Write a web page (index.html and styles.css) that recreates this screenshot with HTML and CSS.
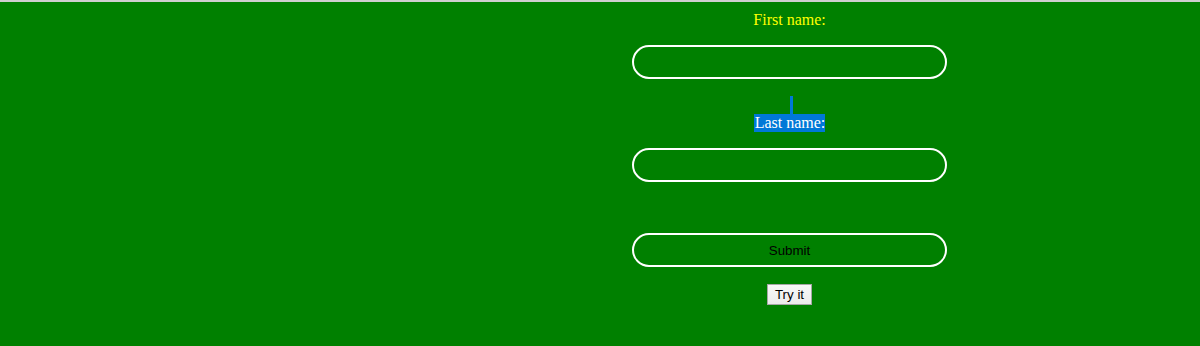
FILE: index.html
```html
<!DOCTYPE html>
<html>
<head>
<meta charset="utf-8">
<link rel="stylesheet" href="styles.css">
</head>
<body>
<div class="page">
  <form class="form">
    <label class="label first">First name:</label>
    <input class="field" type="text">
    <div class="caret-line"><span class="caret"></span></div>
    <label class="label last"><span class="sel">Last name:</span></label>
    <input class="field" type="text">
    <input class="field submit" type="submit" value="Submit">
    <div class="try-row"><button type="button" class="try">Try it</button></div>
  </form>
</div>
</body>
</html>
```
FILE: styles.css
```css
html, body {
  margin: 0;
  padding: 0;
  background: #008000;
}
.page {
  border-top: 2px solid #cfcfcf;
  background: #008000;
  height: 344px;
  box-sizing: border-box;
  display: flex;
}
.form {
  margin-left: 632px;
  width: 315px;
  display: flex;
  flex-direction: column;
  align-items: stretch;
  text-align: center;
  font-family: "Liberation Serif", "Times New Roman", serif;
  font-size: 16px;
}
.label {
  display: block;
  height: 18px;
  line-height: 18px;
}
.first {
  margin-top: 9px;
  color: #ffff00;
}
.field {
  display: block;
  box-sizing: border-box;
  width: 315px;
  height: 34px;
  border: 2px solid #ffffff;
  border-radius: 17px;
  background: transparent;
  margin: 16px 0 0 0;
  padding: 0 12px;
  outline: none;
}
.caret-line {
  height: 18px;
  margin-top: 17px;
  display: flex;
  justify-content: center;
}
.caret {
  display: block;
  width: 3px;
  height: 18px;
  margin-left: 4px;
  background: #0078d7;
}
.last {
  color: #ffffff;
}
.sel {
  background: #0078d7;
  display: inline-block;
  height: 18px;
  padding: 0 0 0 1px;
}
.submit {
  margin-top: 51px;
  font-family: "Liberation Sans", Arial, sans-serif;
  font-size: 13.33px;
  color: #000000;
  cursor: pointer;
}
.try-row {
  margin-top: 17px;
  display: flex;
  justify-content: center;
}
.try {
  box-sizing: border-box;
  height: 21px;
  width: 45px;
  padding: 0;
  border: 1px solid #a7a7a7;
  background: linear-gradient(#f8f8f8, #ececec);
  font-family: "Liberation Sans", Arial, sans-serif;
  font-size: 13.33px;
  color: #000;
}
```
